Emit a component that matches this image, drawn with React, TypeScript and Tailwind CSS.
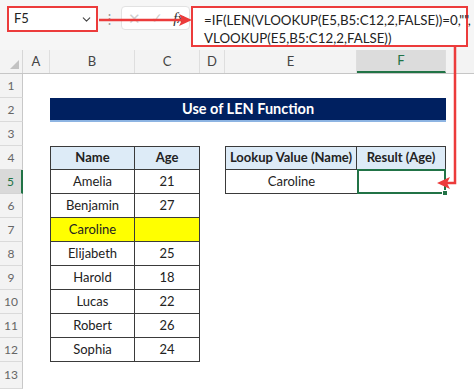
import { ChevronDown } from "lucide-react";

const cols = "grid grid-cols-[23px_27px_85px_65px_25px_132px_89px_28px] grid-rows-[100%]";
const font = "font-['Lato','Open_Sans',sans-serif]";

const people: [string, string][] = [
  ["Amelia", "21"],
  ["Benjamin", "27"],
  ["Caroline", ""],
  ["Elijabeth", "25"],
  ["Harold", "18"],
  ["Lucas", "22"],
  ["Robert", "26"],
  ["Sophia", "24"],
];

function RowHead({ n, active }: { n: number; active?: boolean }) {
  return (
    <div
      className={
        active
          ? "flex items-center justify-center border-b border-r-2 border-b-[#d4d4d4] border-r-[#217346] bg-[#d9d9d9] text-[12px] text-[#217346]"
          : "flex items-center justify-center border-b border-r border-b-[#dadada] border-r-[#c8c8c8] bg-[#f3f3f3] text-[12px] text-[#666]"
      }
    >
      {n}
    </div>
  );
}

function Blank() {
  return <div />;
}

export default function App() {
  return (
    <div className={`relative h-[389px] w-[474px] overflow-hidden bg-white ${font}`}>
      {/* formula bar */}
      <div className="flex h-[50px] items-start bg-[#f6f6f6] pl-[7px] pt-[6px]">
        <div className="flex h-[26px] w-[91px] items-center justify-between border-2 border-[#ec3b3b] bg-white pl-[5px] pr-[3px] text-[13px] text-[#222]">
          <span>F5</span>
          <ChevronDown size={13} strokeWidth={2} className="text-[#444]" />
        </div>
        <div className="flex h-[26px] w-[23px] items-center justify-center text-[13px] text-[#999]">⋮</div>
        <div className="flex h-[24px] w-[69px] items-center justify-between rounded-[4px] border border-[#e2e2e2] bg-white pl-[6px] pr-[5px]">
          <span className="text-[15px] leading-none text-[#cfcfcf]">✕</span>
          <span className="text-[14px] leading-none text-[#cfcfcf]">✓</span>
          <span className="font-['Liberation_Serif',serif] text-[15px] italic leading-none text-[#333]">fx</span>
        </div>
        <div className="ml-[1px] h-[41px] w-[277px] whitespace-nowrap border-2 border-[#ec3b3b] bg-white px-[11px] pt-[3px] text-[13.3px] leading-[18px] text-[#222]">
          <div>=IF(LEN(VLOOKUP(E5,B5:C12,2,FALSE))=0,"",</div>
          <div>VLOOKUP(E5,B5:C12,2,FALSE))</div>
        </div>
      </div>

      {/* column headers */}
      <div className={`${cols} h-[24px] border-b border-[#c6c6c6] bg-[#f3f3f3] text-[13px] text-[#444]`}>
        <div className="relative border-r border-[#d6d6d6]">
          <div className="absolute bottom-[4px] right-[3px] h-0 w-0 border-b-[9px] border-l-[9px] border-b-[#c2c2c2] border-l-transparent" />
        </div>
        {["A", "B", "C", "D", "E"].map((c) => (
          <div key={c} className="flex items-center justify-center border-r border-[#dedede]">
            {c}
          </div>
        ))}
        <div className="flex items-center justify-center border-b-2 border-r border-b-[#217346] border-r-[#dedede] bg-[#dcdcdc] text-[#217346]">
          F
        </div>
        <div />
      </div>

      {/* sheet body */}
      <div className="whitespace-nowrap text-[13px] text-[#222]">
        <div className={`${cols} h-[24px]`}>
          <RowHead n={1} />
        </div>
        <div className={`${cols} h-[24px]`}>
          <RowHead n={2} />
          <Blank />
          <div className="col-span-5 flex items-center justify-center border-b-2 border-[#8db4e2] bg-[#002060] text-[14.5px] font-bold text-white">
            Use of LEN Function
          </div>
        </div>
        <div className={`${cols} h-[24px]`}>
          <RowHead n={3} />
        </div>
        <div className={`${cols} h-[24px]`}>
          <RowHead n={4} />
          <Blank />
          <div className="flex items-center justify-center border border-[#3a3a3a] bg-[#ddebf7] font-bold">Name</div>
          <div className="flex items-center justify-center border-y border-r border-[#3a3a3a] bg-[#ddebf7] font-bold">Age</div>
          <Blank />
          <div className="flex items-center justify-center border border-[#3a3a3a] bg-[#ddebf7] font-bold">Lookup Value (Name)</div>
          <div className="flex items-center justify-center border-y border-r border-[#3a3a3a] bg-[#ddebf7] font-bold">Result (Age)</div>
        </div>
        {people.map(([name, age], i) => {
          const row = i + 5;
          const yellow = name === "Caroline" ? "bg-[#ffff00]" : "";
          return (
            <div key={name} className={`${cols} h-[24px]`}>
              <RowHead n={row} active={row === 5} />
              <Blank />
              <div className={`flex items-center justify-center border-x border-b border-[#3a3a3a] ${yellow}`}>{name}</div>
              <div className={`flex items-center justify-center border-b border-r border-[#3a3a3a] ${yellow}`}>{age}</div>
              <Blank />
              {row === 5 && (
                <>
                  <div className="flex items-center justify-center border-b border-l border-[#3a3a3a]">Caroline</div>
                  <div className="relative -mt-[1px] border-2 border-[#217346]">
                    <div className="absolute -bottom-[4px] -right-[4px] h-[6px] w-[6px] border border-white bg-[#217346]" />
                  </div>
                </>
              )}
            </div>
          );
        })}
        <div className={`${cols} h-[27px]`}>
          <RowHead n={13} />
        </div>
      </div>

      {/* annotation arrows */}
      <svg className="pointer-events-none absolute left-0 top-0" width="474" height="389">
        <line x1="99" y1="20" x2="183" y2="20" stroke="#ec3b3b" strokeWidth="2.5" />
        <polygon points="192,20 179,14 182,20 179,26" fill="#ec3b3b" />
        <polyline points="455,47 455,183 446,183" fill="none" stroke="#ec3b3b" strokeWidth="2.5" />
        <polygon points="437,183 450,177 447,183 450,189" fill="#ec3b3b" />
      </svg>
    </div>
  );
}
